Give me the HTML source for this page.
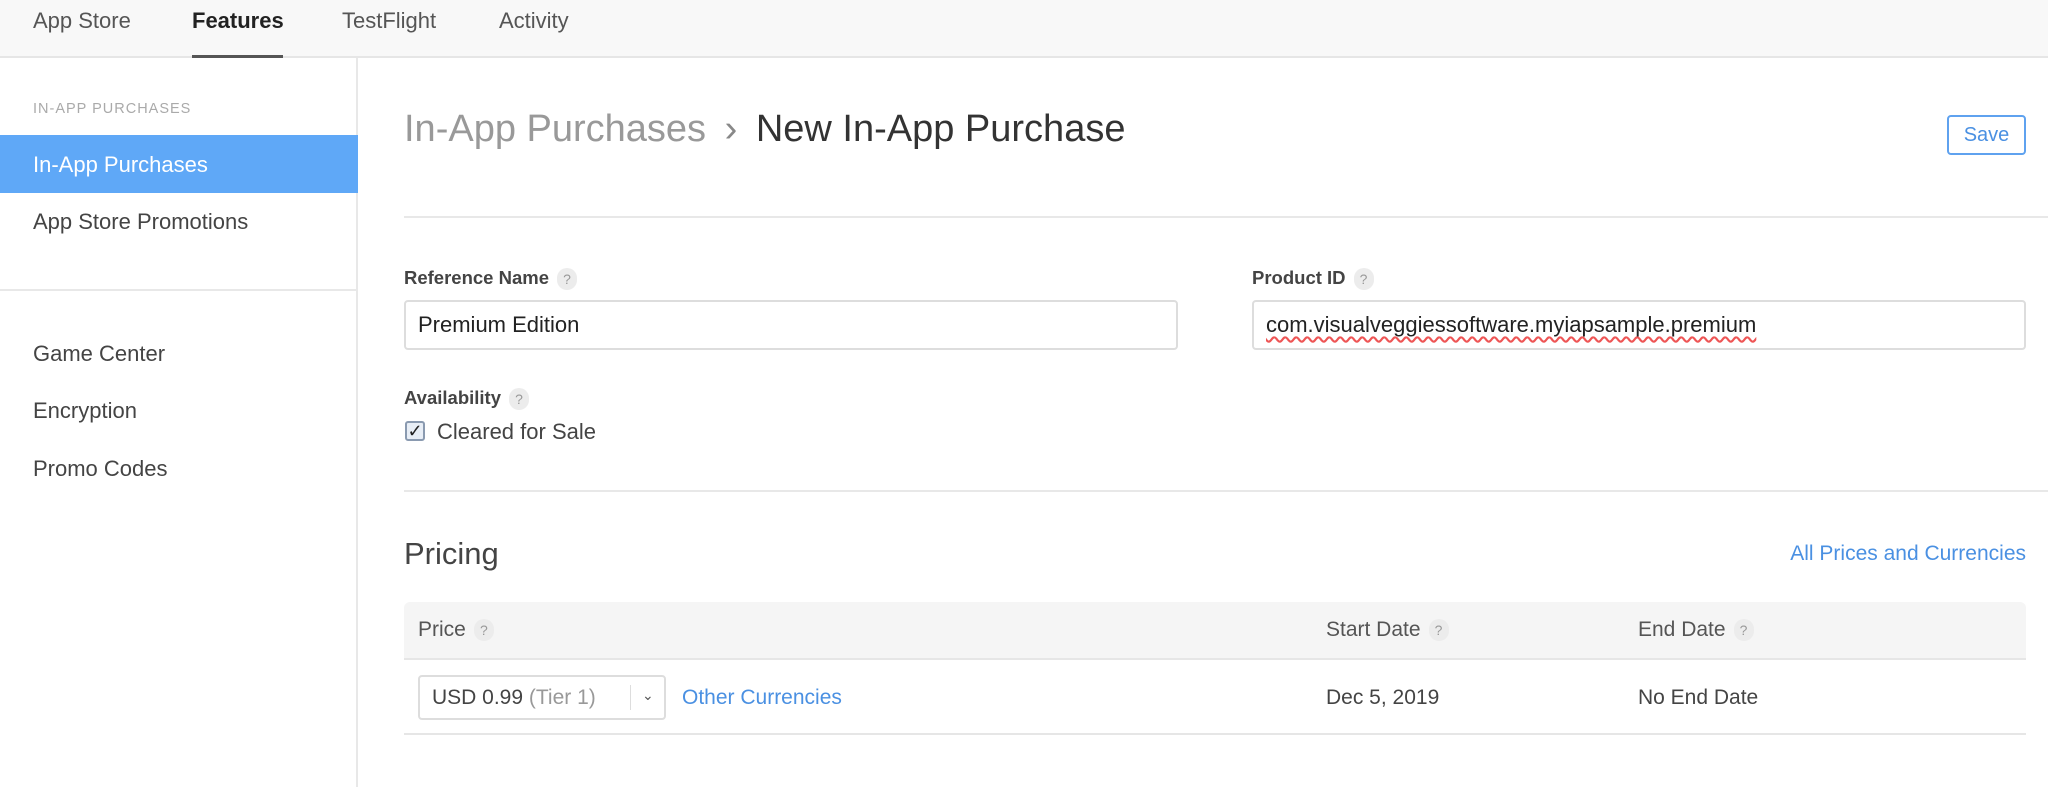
<!DOCTYPE html>
<html><head><meta charset="utf-8"><style>
*{box-sizing:border-box;margin:0;padding:0}
body{width:2048px;height:787px;overflow:hidden;background:#fff;font-family:"Liberation Sans",sans-serif;color:#333;position:relative}
.abs{position:absolute;white-space:nowrap}
.nav{position:absolute;left:0;top:0;width:2048px;height:58px;background:#f8f8f8;border-bottom:2px solid #e6e6e6}
.tab{position:absolute;top:8px;font-size:22px;color:#555}
.side{position:absolute;left:0;top:58px;width:358px;height:729px;border-right:2px solid #e8e8e8}
.q{display:inline-block;width:20px;height:22px;border-radius:10px;background:#ececec;color:#999;font-size:14px;text-align:center;line-height:22px;vertical-align:middle;margin-left:8px;font-weight:normal}
.lbl{font-size:18.5px;font-weight:bold;color:#444}
.inp{position:absolute;height:50px;border:2px solid #ddd;border-radius:4px;font-size:22px;line-height:46px;padding-left:12px;color:#222}
.hr{position:absolute;left:404px;width:1644px;height:2px;background:#e8e8e8}
</style></head><body>
<div class="nav">
<div class="tab" style="left:33px">App Store</div>
<div class="tab" style="left:192px;color:#222;font-weight:bold">Features</div>
<div style="position:absolute;left:192px;top:55px;width:91px;height:3px;background:#555"></div>
<div class="tab" style="left:342px">TestFlight</div>
<div class="tab" style="left:499px">Activity</div>
</div>
<div class="side"></div>
<div class="abs" style="left:33px;top:101px;font-size:14.5px;color:#aaa;letter-spacing:1px">IN-APP PURCHASES</div>
<div class="abs" style="left:0;top:135px;width:358px;height:58px;background:#5fa8f7"></div>
<div class="abs" style="left:33px;top:152px;font-size:22px;color:#fff">In-App Purchases</div>
<div class="abs" style="left:33px;top:209px;font-size:22px;color:#444">App Store Promotions</div>
<div class="abs" style="left:0;top:289px;width:358px;height:2px;background:#e8e8e8"></div>
<div class="abs" style="left:33px;top:341px;font-size:22px;color:#444">Game Center</div>
<div class="abs" style="left:33px;top:398px;font-size:22px;color:#444">Encryption</div>
<div class="abs" style="left:33px;top:456px;font-size:22px;color:#444">Promo Codes</div>

<div class="abs" style="left:404px;top:108px;font-size:38px;color:#999">In-App Purchases <span style="color:#888;margin:0 8px">›</span> <span style="color:#333">New In-App Purchase</span></div>
<div class="abs" style="left:1947px;top:115px;width:79px;height:40px;border:2px solid #5fa2ef;border-radius:4px;color:#4a90e2;font-size:20px;text-align:center;line-height:36px">Save</div>
<div class="hr" style="top:216px"></div>

<div class="abs lbl" style="left:404px;top:267px">Reference Name<span class="q">?</span></div>
<div class="inp" style="left:404px;top:300px;width:774px">Premium Edition</div>
<div class="abs lbl" style="left:1252px;top:267px">Product ID<span class="q">?</span></div>
<div class="inp" style="left:1252px;top:300px;width:774px"><span style="text-decoration:underline wavy #e55;text-underline-offset:4px">com.visualveggiessoftware.myiapsample.premium</span></div>
<div class="abs lbl" style="left:404px;top:387px">Availability<span class="q">?</span></div>
<div class="abs" style="left:405px;top:421px;width:20px;height:20px;border:2px solid #8a9ab0;border-radius:3px;background:#e8eef6;font-size:18px;line-height:16px;text-align:center;color:#222">✓</div>
<div class="abs" style="left:437px;top:419px;font-size:22px;color:#444">Cleared for Sale</div>
<div class="hr" style="top:490px"></div>

<div class="abs" style="left:404px;top:536px;font-size:31px;color:#444">Pricing</div>
<div class="abs" style="right:22px;top:542px;font-size:21px;color:#4a90e2">All Prices and Currencies</div>
<div class="abs" style="left:404px;top:602px;width:1622px;height:58px;background:#f5f5f5;border-radius:6px 6px 0 0;border-bottom:2px solid #e6e6e6"></div>
<div class="abs" style="left:418px;top:618px;font-size:21px;color:#555">Price<span class="q">?</span></div>
<div class="abs" style="left:1326px;top:618px;font-size:21px;color:#555">Start Date<span class="q">?</span></div>
<div class="abs" style="left:1638px;top:618px;font-size:21px;color:#555">End Date<span class="q">?</span></div>
<div class="abs" style="left:418px;top:675px;width:248px;height:45px;border:2px solid #ddd;border-radius:4px;font-size:21px;line-height:41px;padding-left:12px;color:#444">USD 0.99 <span style="color:#999">(Tier 1)</span>
<div style="position:absolute;left:210px;top:8px;width:1px;height:25px;background:#ddd"></div>
<div style="position:absolute;left:222px;top:-2px;font-size:14px;color:#555">⌄</div></div>
<div class="abs" style="left:682px;top:686px;font-size:21px;color:#4a90e2">Other Currencies</div>
<div class="abs" style="left:1326px;top:686px;font-size:21px;color:#444">Dec 5, 2019</div>
<div class="abs" style="left:1638px;top:686px;font-size:21px;color:#444">No End Date</div>
<div class="abs" style="left:404px;top:733px;width:1622px;height:2px;background:#e6e6e6"></div>
</body></html>
